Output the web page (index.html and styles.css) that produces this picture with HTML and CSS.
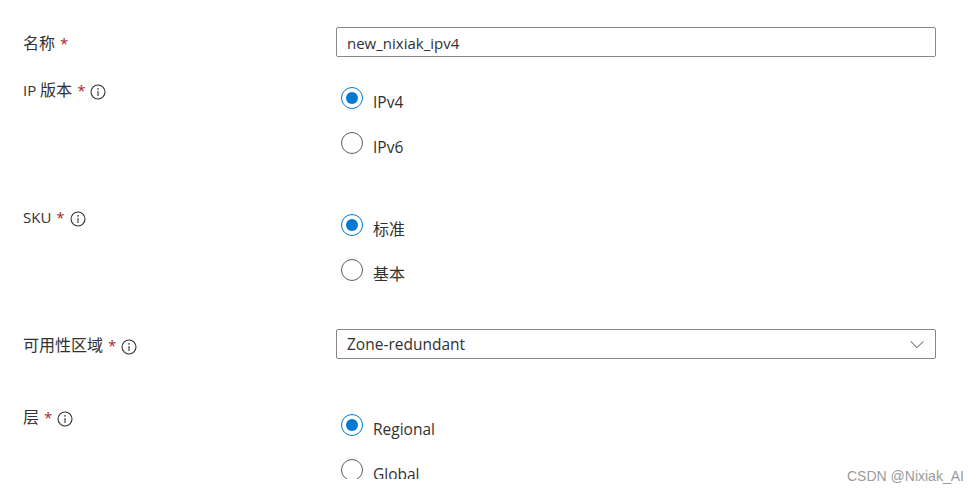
FILE: index.html
```html
<!DOCTYPE html>
<html lang="zh">
<head>
<meta charset="utf-8">
<title>Form</title>
<link rel="stylesheet" href="styles.css">
</head>
<body>
<form class="form">
  <div class="row row-name">
    <div class="label"><span class="cjk">名称</span><span class="req">*</span></div>
    <div class="field"><div class="box">new_nixiak_ipv4</div></div>
  </div>
  <div class="row row-ip">
    <div class="label"><span>IP <span class="cjk">版本</span></span><span class="req">*</span>
      <svg class="info" viewBox="0 0 16 16"><circle cx="8" cy="8" r="7" /><circle class="dot" cx="8" cy="4.9" r=".8"/><path d="M8 7v5"/></svg>
    </div>
    <div class="field radios">
      <div class="radio"><span class="mark on"></span><span class="opt">IPv4</span></div>
      <div class="radio"><span class="mark"></span><span class="opt">IPv6</span></div>
    </div>
  </div>
  <div class="row row-sku">
    <div class="label"><span>SKU</span><span class="req">*</span>
      <svg class="info" viewBox="0 0 16 16"><circle cx="8" cy="8" r="7" /><circle class="dot" cx="8" cy="4.9" r=".8"/><path d="M8 7v5"/></svg>
    </div>
    <div class="field radios">
      <div class="radio"><span class="mark on"></span><span class="opt cjk">标准</span></div>
      <div class="radio"><span class="mark"></span><span class="opt cjk">基本</span></div>
    </div>
  </div>
  <div class="row row-zone">
    <div class="label"><span class="cjk">可用性区域</span><span class="req">*</span>
      <svg class="info" viewBox="0 0 16 16"><circle cx="8" cy="8" r="7" /><circle class="dot" cx="8" cy="4.9" r=".8"/><path d="M8 7v5"/></svg>
    </div>
    <div class="field"><div class="box select"><span>Zone-redundant</span>
      <svg class="chev" viewBox="0 0 16 10"><path d="M1 1.5l7 7 7-7"/></svg></div></div>
  </div>
  <div class="row row-tier">
    <div class="label"><span class="cjk">层</span><span class="req">*</span>
      <svg class="info" viewBox="0 0 16 16"><circle cx="8" cy="8" r="7" /><circle class="dot" cx="8" cy="4.9" r=".8"/><path d="M8 7v5"/></svg>
    </div>
    <div class="field radios">
      <div class="radio"><span class="mark on"></span><span class="opt">Regional</span></div>
      <div class="radio"><span class="mark"></span><span class="opt">Global</span></div>
    </div>
  </div>
</form>
<div class="watermark">CSDN @Nixiak_AI</div>
</body>
</html>
```
FILE: styles.css
```css
* { box-sizing: border-box; }
html, body { margin: 0; height: 100%; background: #fff; }
body {
  position: relative;
  overflow: hidden;
  font-family: "Open Sans", "Noto Sans CJK SC", sans-serif;
  font-size: 15px;
  color: #323130;
}
.cjk { font-size: 16px; }
.form {
  height: 479px;
  overflow: hidden;
  padding: 27px 41px 0 23px;
}
.row {
  display: grid;
  grid-template-columns: 313px 1fr;
  align-items: start;
}
.label {
  display: flex;
  align-items: center;
  height: 20px;
  line-height: 20px;
}
.req { color: #a4262c; margin-left: 5px; }
.info {
  width: 16px;
  height: 16px;
  margin: 4px 0 0 5px;
  fill: none;
  stroke: #323130;
  stroke-width: 1.1;
}
.info .dot { fill: #323130; stroke: none; }
.box {
  height: 30px;
  border: 1px solid #8a8886;
  border-radius: 2px;
  padding: 0 10px;
  line-height: 30px;
}
.select {
  display: flex;
  justify-content: space-between;
  align-items: center;
  font-size: 15.5px;
}
.chev {
  width: 16px;
  height: 9px;
  fill: none;
  stroke: #323130;
  stroke-width: 1;
}
.radios { display: flex; flex-direction: column; gap: 22px; padding-left: 5px; }
.radio { display: flex; align-items: flex-start; height: 23px; }
.mark {
  width: 22px;
  height: 22px;
  border: 1px solid #605e5c;
  border-radius: 50%;
  flex: none;
  display: flex;
  align-items: center;
  justify-content: center;
}
.mark.on { border-color: #0078d4; }
.mark.on::after {
  content: "";
  width: 12px;
  height: 12px;
  border-radius: 50%;
  background: #0078d4;
}
.opt { margin: 5px 0 0 10px; line-height: 20px; font-size: 15.5px; }
.opt.cjk { font-size: 16px; }
.row-name .label { margin-top: 6px; }
.row-ip { margin-top: 23px; }
.row-ip .radios { padding-top: 7px; }
.row-sku { margin-top: 52px; }
.row-sku .radios { padding-top: 7px; }
.row-zone { margin-top: 47px; }
.row-zone .label { margin-top: 6px; }
.row-tier { margin-top: 48px; }
.row-tier .radios { padding-top: 7px; }
.watermark {
  position: absolute;
  left: 847px;
  top: 467px;
  font-family: "Liberation Sans", sans-serif;
  font-size: 14px;
  line-height: 18px;
  color: #9a9a9a;
}
```
